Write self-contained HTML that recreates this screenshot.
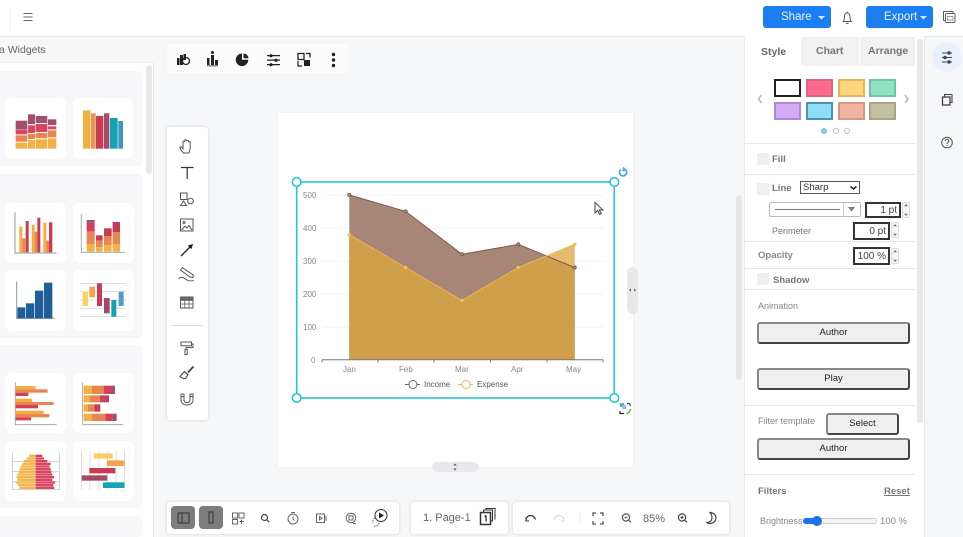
<!DOCTYPE html>
<html lang="en"><head><meta charset="utf-8"><title>Chart editor</title>
<style>
html,body{margin:0;padding:0;background:#fff;width:963px;height:537px;overflow:hidden}
body{position:relative;font-family:"Liberation Sans",sans-serif;color:#555}
div{position:absolute;box-sizing:border-box}
#root{left:0;top:0;width:963px;height:537px;overflow:hidden}
.t{white-space:nowrap;line-height:1;filter:blur(.3px);margin-top:1px}
.card{background:#fff;border-radius:7px}
.grp{background:#f7f7fa;border-radius:0 6px 6px 0;left:0;width:143px}
.pan{background:#fff;border-radius:3px;box-shadow:0 0 3px rgba(0,0,0,.16)}
.sw{width:27px;height:18px;border:2px solid}
.hr{left:744px;width:171px;height:1px;background:#e6e6e6}
.chk{width:12px;height:12px;background:#efeff1}
.btn{background:#efeff0;border:2px solid #888;border-right-color:#444;border-bottom-color:#444;border-radius:3px;font-size:9.5px;color:#222;text-align:center;margin-top:0}
.inp{background:#fff;border:2px solid #333;font-size:10px;color:#444;text-align:right;padding-right:2px;margin-top:0}
.spin{background:#f4f4f4;border:1px solid #ddd;border-radius:2px;width:8px}
</style></head><body><div id="root">

<!-- backgrounds -->
<div style="left:0;top:36px;width:963px;height:501px;background:#f6f7f9"></div>
<div style="left:0;top:36px;width:963px;height:1px;background:#e9e9ea"></div>
<div style="left:10px;top:8px;width:1px;height:22px;background:#efefef"></div>
<div style="left:0;top:37px;width:154px;height:500px;background:#fff;border-right:1px solid #e6e7ea"></div>
<div style="left:0;top:37px;width:154px;height:26px;background:#f7f7f9;border-bottom:1px solid #eee"></div>
<div class="t" style="left:-1px;top:44px;font-size:10.5px;color:#666">a Widgets</div>
<div style="left:146px;top:65px;width:6px;height:109px;background:#e8e8ea;border-radius:3px"></div>

<div class="grp" style="top:71px;height:95px"></div>
<div class="grp" style="top:174px;height:164px"></div>
<div class="grp" style="top:345px;height:163px"></div>
<div class="grp" style="top:516px;height:21px"></div>
<div class="card" style="left:5px;top:98px;width:61px;height:61px"></div>
<div class="card" style="left:73px;top:98px;width:60px;height:61px"></div>
<div class="card" style="left:5px;top:203px;width:61px;height:60px"></div>
<div class="card" style="left:73px;top:203px;width:61px;height:60px"></div>
<div class="card" style="left:5px;top:270px;width:61px;height:61px"></div>
<div class="card" style="left:73px;top:270px;width:61px;height:61px"></div>
<div class="card" style="left:5px;top:373px;width:61px;height:60px"></div>
<div class="card" style="left:73px;top:373px;width:61px;height:60px"></div>
<div class="card" style="left:5px;top:441px;width:61px;height:60px"></div>
<div class="card" style="left:73px;top:441px;width:61px;height:60px"></div>

<!-- canvas chrome -->
<div style="left:167px;top:44px;width:182px;height:30px;background:#fbfbfc;border-radius:2px;box-shadow:0 0 1px rgba(0,0,0,.08)"></div>
<div class="pan" style="left:167px;top:127px;width:41px;height:293px"></div>
<div style="left:171px;top:325px;width:32px;height:1px;background:#ddd"></div>
<div style="left:278px;top:113px;width:355px;height:354px;background:#fff;box-shadow:0 0 2px rgba(0,0,0,.08)"></div>
<div style="left:627px;top:267px;width:11px;height:47px;background:#e8e8eb;border-radius:6px"></div>
<div style="left:432px;top:462px;width:47px;height:10px;background:#e8e8eb;border-radius:6px"></div>
<div style="left:736px;top:195px;width:6px;height:185px;background:#e6e6e8;border-radius:3px"></div>

<div class="pan" style="left:167px;top:502px;width:232px;height:32px"></div>
<div class="pan" style="left:411px;top:502px;width:97px;height:32px"></div>
<div class="pan" style="left:513px;top:502px;width:216px;height:32px"></div>
<div style="left:171px;top:506px;width:24px;height:23px;background:#7d7d7f;border-radius:4px"></div>
<div style="left:199px;top:506px;width:24px;height:23px;background:#7d7d7f;border-radius:4px"></div>
<div class="t" style="left:423px;top:512px;font-size:11px;color:#666">1. Page-1</div>
<div class="t" style="left:643px;top:513px;font-size:11px;color:#666">85%</div>

<!-- chart labels -->
<div class="t" style="left:303px;top:191px;font-size:8px;color:#888">500</div>
<div class="t" style="left:303px;top:224px;font-size:8px;color:#888">400</div>
<div class="t" style="left:303px;top:257px;font-size:8px;color:#888">300</div>
<div class="t" style="left:303px;top:290px;font-size:8px;color:#888">200</div>
<div class="t" style="left:303px;top:323px;font-size:8px;color:#888">100</div>
<div class="t" style="left:311px;top:356px;font-size:8px;color:#888">0</div>
<div class="t" style="left:343px;top:365px;font-size:8px;color:#888">Jan</div>
<div class="t" style="left:399px;top:365px;font-size:8px;color:#888">Feb</div>
<div class="t" style="left:455px;top:365px;font-size:8px;color:#888">Mar</div>
<div class="t" style="left:511px;top:365px;font-size:8px;color:#888">Apr</div>
<div class="t" style="left:566px;top:365px;font-size:8px;color:#888">May</div>
<div class="t" style="left:424px;top:380px;font-size:8px;color:#555">Income</div>
<div class="t" style="left:477px;top:380px;font-size:8px;color:#555">Expense</div>

<!-- top bar -->
<div style="left:763px;top:6px;width:68px;height:22px;background:#1b7ef2;border-radius:3px"></div>
<div style="left:866px;top:6px;width:67px;height:22px;background:#1b7ef2;border-radius:3px"></div>
<div class="t" style="left:781px;top:11px;font-size:11.5px;color:#e8f2ff">Share</div>
<div class="t" style="left:884px;top:11px;font-size:11.5px;color:#e8f2ff">Export</div>

<!-- right panel -->
<div style="left:744px;top:36px;width:181px;height:501px;background:#fff;border-left:1px solid #e8e8e8;border-right:1px solid #e8e8e8"></div>
<div style="left:801px;top:37px;width:58px;height:29px;background:#f1f1f2"></div>
<div style="left:860px;top:37px;width:55px;height:29px;background:#f1f1f2"></div>
<div class="t" style="left:761px;top:46px;font-size:10.5px;font-weight:bold;color:#666">Style</div>
<div class="t" style="left:816px;top:45px;font-size:10.5px;font-weight:bold;color:#777">Chart</div>
<div class="t" style="left:868px;top:45px;font-size:10.5px;font-weight:bold;color:#777">Arrange</div>
<div style="left:917px;top:39px;width:6px;height:384px;background:#e8e8ea;border-radius:3px"></div>

<div class="sw" style="left:774px;top:79px;background:#fff;border-color:#222"></div>
<div class="sw" style="left:806px;top:79px;background:#ff6b8e;border-color:#d9667f"></div>
<div class="sw" style="left:838px;top:79px;background:#ffd57f;border-color:#e0b45c"></div>
<div class="sw" style="left:869px;top:79px;background:#8fe3c4;border-color:#6fc4a6"></div>
<div class="sw" style="left:774px;top:102px;background:#d4a9f8;border-color:#b08ad0"></div>
<div class="sw" style="left:806px;top:102px;background:#90dcfb;border-color:#4d93ad"></div>
<div class="sw" style="left:838px;top:102px;background:#f2b4a0;border-color:#d19a88"></div>
<div class="sw" style="left:869px;top:102px;background:#c5bfa0;border-color:#a8a488"></div>
<div style="left:821px;top:128px;width:6px;height:6px;border-radius:50%;background:#88c6ee"></div>
<div style="left:833px;top:128px;width:6px;height:6px;border-radius:50%;border:1px solid #bbb"></div>
<div style="left:844px;top:128px;width:6px;height:6px;border-radius:50%;border:1px solid #bbb"></div>

<div class="hr" style="top:143px"></div>
<div class="hr" style="top:174px"></div>
<div class="hr" style="top:241px"></div>
<div class="hr" style="top:268px"></div>
<div class="hr" style="top:289px"></div>
<div class="hr" style="top:405px"></div>
<div class="hr" style="top:474px"></div>

<div class="chk" style="left:757px;top:153px"></div>
<div class="t" style="left:772px;top:154px;font-size:9.5px;font-weight:bold;color:#777">Fill</div>
<div class="chk" style="left:757px;top:183px"></div>
<div class="t" style="left:772px;top:183px;font-size:9.5px;font-weight:bold;color:#777">Line</div>
<div style="left:800px;top:181px;width:60px;height:13px;border:1px solid #555;background:#fff"></div>
<div class="t" style="left:803px;top:182px;font-size:9.5px;color:#333">Sharp</div>
<div style="left:769px;top:202px;width:92px;height:15px;border:1px solid #bbb;border-radius:2px;background:#fff"></div>
<div style="left:775px;top:209px;width:65px;height:1px;background:#777"></div>
<div style="left:843px;top:203px;width:1px;height:13px;background:#ccc"></div>
<div class="inp t" style="left:865px;top:202px;width:36px;height:16px;line-height:14px">1 pt</div>
<div class="spin" style="left:902px;top:202px;height:16px"></div>
<div class="t" style="left:772px;top:226px;font-size:9px;color:#777">Perimeter</div>
<div class="inp t" style="left:853px;top:222px;width:37px;height:18px;line-height:15px">0 pt</div>
<div class="spin" style="left:891px;top:222px;height:16px"></div>
<div class="t" style="left:758px;top:250px;font-size:9.5px;font-weight:bold;color:#888">Opacity</div>
<div class="inp t" style="left:853px;top:247px;width:37px;height:18px;line-height:15px">100 %</div>
<div class="spin" style="left:891px;top:248px;height:16px"></div>
<div class="chk" style="left:757px;top:273px"></div>
<div class="t" style="left:773px;top:275px;font-size:9.5px;font-weight:bold;color:#777">Shadow</div>
<div class="t" style="left:758px;top:301px;font-size:9px;color:#888">Animation</div>
<div class="btn t" style="left:757px;top:322px;width:153px;height:22px;line-height:18px">Author</div>
<div class="btn t" style="left:757px;top:368px;width:153px;height:22px;line-height:18px">Play</div>
<div class="t" style="left:758px;top:416px;font-size:9px;color:#888">Filter template</div>
<div class="btn t" style="left:826px;top:413px;width:73px;height:22px;line-height:18px">Select</div>
<div class="btn t" style="left:757px;top:438px;width:153px;height:22px;line-height:18px">Author</div>
<div class="t" style="left:758px;top:486px;font-size:9.5px;font-weight:bold;color:#777">Filters</div>
<div class="t" style="left:884px;top:486px;font-size:9.5px;font-weight:bold;color:#777;text-decoration:underline">Reset</div>
<div class="t" style="left:760px;top:516px;font-size:9px;color:#888">Brightness</div>
<div style="left:803px;top:518px;width:74px;height:6px;border:1px solid #ccc;border-radius:3px;background:#f4f4f4"></div>
<div style="left:803px;top:518px;width:14px;height:6px;border-radius:3px;background:#1a73e8"></div>
<div style="left:812px;top:516px;width:10px;height:10px;border-radius:50%;background:#1a73e8"></div>
<div class="t" style="left:880px;top:516px;font-size:9.5px;color:#888">100 %</div>
<div style="left:932px;top:42px;width:30px;height:30px;border-radius:50%;background:#eaf0fb"></div>

<!-- vector overlay -->
<svg width="963" height="537" viewBox="0 0 963 537" style="position:absolute;left:0;top:0;filter:blur(.3px)">
<g transform="scale(.33333)">
 <rect x="47" y="362" width="35" height="26" fill="#a0506a"/><rect x="47" y="389" width="35" height="14" fill="#d9445f"/><rect x="47" y="406" width="35" height="19" fill="#e8864f"/><rect x="47" y="428" width="35" height="18" fill="#f0b245"/>
 <rect x="84" y="343" width="21" height="29" fill="#a0506a"/><rect x="84" y="376" width="21" height="23" fill="#d9445f"/><rect x="84" y="402" width="21" height="15" fill="#e8864f"/><rect x="84" y="420" width="21" height="26" fill="#f0b245"/>
 <rect x="107" y="348" width="35" height="21" fill="#a0506a"/><rect x="107" y="372" width="35" height="24" fill="#d9445f"/><rect x="107" y="399" width="35" height="16" fill="#e8864f"/><rect x="107" y="418" width="35" height="28" fill="#f0b245"/>
 <rect x="144" y="358" width="25" height="17" fill="#a0506a"/><rect x="144" y="379" width="25" height="9" fill="#d9445f"/><rect x="144" y="391" width="25" height="21" fill="#e8864f"/><rect x="144" y="415" width="25" height="31" fill="#f0b245"/>
 <rect x="249" y="331" width="22" height="115" fill="#f0b040"/><rect x="273" y="340" width="14" height="106" fill="#e8964f"/><rect x="288" y="348" width="22" height="98" fill="#c93a55"/><rect x="312" y="340" width="16" height="106" fill="#a34a68"/><rect x="330" y="354" width="23" height="92" fill="#14a3b5"/><rect x="355" y="363" width="14" height="83" fill="#3f92c2"/>
 <path d="M45 637V759H170" fill="none" stroke="#999" stroke-width="3"/>
 <rect x="58" y="680" width="9" height="77" fill="#f0b040"/><rect x="67" y="715" width="9" height="42" fill="#e8864f"/><rect x="77" y="663" width="9" height="94" fill="#c93a55"/>
 <rect x="95" y="674" width="9" height="83" fill="#f0b040"/><rect x="104" y="695" width="8" height="62" fill="#e8864f"/><rect x="112" y="653" width="9" height="104" fill="#c93a55"/>
 <rect x="130" y="668" width="9" height="89" fill="#f0b040"/><rect x="139" y="722" width="8" height="35" fill="#e8864f"/><rect x="147" y="667" width="10" height="90" fill="#c93a55"/>
 <path d="M244 642V757H375" fill="none" stroke="#aaa" stroke-width="3"/>
 <rect x="260" y="660" width="24" height="8" fill="#a0506a"/><rect x="260" y="668" width="24" height="27" fill="#d33e5a"/><rect x="260" y="695" width="24" height="37" fill="#e8864f"/><rect x="260" y="732" width="24" height="23" fill="#f0b245"/>
 <rect x="288" y="706" width="20" height="16" fill="#c93a55"/><rect x="288" y="722" width="20" height="20" fill="#e8864f"/><rect x="288" y="742" width="20" height="13" fill="#f0b245"/>
 <rect x="312" y="685" width="23" height="23" fill="#c93a55"/><rect x="312" y="708" width="23" height="28" fill="#e8864f"/><rect x="312" y="736" width="23" height="19" fill="#f0b245"/>
 <rect x="338" y="666" width="22" height="31" fill="#c93a55"/><rect x="338" y="697" width="22" height="35" fill="#e8864f"/><rect x="338" y="732" width="22" height="23" fill="#f0b245"/>
</g>
<g transform="translate(0,270) scale(.33333)">
 <path d="M50 35V145H164" fill="none" stroke="#8a97a5" stroke-width="3"/>
 <rect x="52" y="112" width="24" height="33" fill="#1f5f99"/><rect x="78" y="100" width="25" height="45" fill="#1f5f99"/><rect x="105" y="62" width="25" height="83" fill="#1f5f99"/><rect x="132" y="38" width="25" height="107" fill="#1f5f99"/>
 <path d="M240 40H378M240 65H378M240 90H378M240 115H378M240 140H378" stroke="#ccc" stroke-width="2"/>
 <rect x="248" y="65" width="16" height="43" fill="#fbd060"/><rect x="268" y="50" width="17" height="32" fill="#f5a24e"/><rect x="291" y="40" width="15" height="68" fill="#c93a55"/><rect x="312" y="84" width="17" height="46" fill="#a34a68"/><rect x="334" y="90" width="15" height="50" fill="#14a3b5"/><rect x="356" y="65" width="15" height="43" fill="#4e9cc9"/>
 <path d="M46 337V464H170" fill="none" stroke="#aaa" stroke-width="3"/>
 <rect x="47" y="348" width="60" height="10" fill="#f0b040"/><rect x="47" y="358" width="96" height="10" fill="#e8864f"/><rect x="47" y="368" width="38" height="10" fill="#d33e5a"/>
 <rect x="47" y="386" width="49" height="10" fill="#f0b040"/><rect x="47" y="396" width="114" height="9" fill="#e8864f"/><rect x="47" y="405" width="67" height="10" fill="#d33e5a"/>
 <rect x="47" y="422" width="84" height="10" fill="#f0b040"/><rect x="47" y="432" width="101" height="10" fill="#e8864f"/><rect x="47" y="442" width="46" height="9" fill="#d33e5a"/>
 <path d="M248 337V464H370" fill="none" stroke="#aaa" stroke-width="3"/>
 <rect x="251" y="347" width="25" height="25" fill="#f0b245"/><rect x="276" y="347" width="35" height="25" fill="#e8864f"/><rect x="311" y="347" width="22" height="25" fill="#d33e5a"/><rect x="333" y="347" width="12" height="25" fill="#a0506a"/>
 <rect x="251" y="376" width="19" height="21" fill="#f0b245"/><rect x="270" y="376" width="30" height="21" fill="#e8864f"/><rect x="300" y="376" width="18" height="21" fill="#d33e5a"/><rect x="318" y="376" width="9" height="21" fill="#a0506a"/>
 <rect x="251" y="403" width="13" height="22" fill="#f0b245"/><rect x="264" y="403" width="19" height="22" fill="#e8864f"/><rect x="283" y="403" width="18" height="22" fill="#c93a55"/>
 <rect x="251" y="431" width="25" height="22" fill="#f0b245"/><rect x="276" y="431" width="40" height="22" fill="#e8864f"/><rect x="316" y="431" width="22" height="22" fill="#d33e5a"/><rect x="338" y="431" width="12" height="22" fill="#a0506a"/>
 <path d="M37 548V658H178V548M37 575H178M37 605H178M37 635H178" fill="none" stroke="#bbb" stroke-width="2"/>
 <g fill="#f3b64e">
 <rect x="87" y="554" width="20" height="7"/><rect x="79" y="562" width="28" height="7"/><rect x="72" y="570" width="35" height="7"/><rect x="67" y="578" width="40" height="7"/><rect x="62" y="586" width="45" height="7"/><rect x="59" y="594" width="48" height="7"/><rect x="57" y="602" width="50" height="7"/><rect x="52" y="610" width="55" height="7"/><rect x="50" y="618" width="57" height="7"/><rect x="52" y="626" width="55" height="7"/><rect x="47" y="634" width="60" height="7"/><rect x="54" y="642" width="53" height="7"/><rect x="58" y="650" width="49" height="7"/>
 </g>
 <g fill="#d8435f">
 <rect x="107" y="554" width="20" height="7"/><rect x="107" y="562" width="25" height="7"/><rect x="107" y="570" width="35" height="7"/><rect x="107" y="578" width="45" height="7"/><rect x="107" y="586" width="42" height="7"/><rect x="107" y="594" width="45" height="7"/><rect x="107" y="602" width="47" height="7"/><rect x="107" y="610" width="50" height="7"/><rect x="107" y="618" width="55" height="7"/><rect x="107" y="626" width="50" height="7"/><rect x="107" y="634" width="58" height="7"/><rect x="107" y="642" width="53" height="7"/><rect x="107" y="650" width="56" height="7"/>
 </g>
 <path d="M245 545V660M270 545V660M297 545V660M322 545V660M348 545V660M374 545V660" stroke="#ccc" stroke-width="2"/>
 <rect x="282" y="550" width="56" height="16" fill="#fbd060"/><rect x="321" y="571" width="52" height="17" fill="#f9a24e"/><rect x="268" y="594" width="78" height="16" fill="#c93a55"/><rect x="245" y="616" width="77" height="16" fill="#a34a68"/><rect x="309" y="637" width="64" height="17" fill="#14a3b5"/>
</g>

<!-- main chart -->
<path d="M322 195.3H603M322 228.2H603M322 261.2H603M322 294.1H603M322 327H603" stroke="#f2f2f2"/>
<path d="M349.3 195L405.7 211.4L462 254.3L518.3 244.4L574.7 267.5V359.7H349.3Z" fill="#a78678"/>
<path d="M349.3 234.5L405.7 267.5L462 300.4L518.3 267.5L574.7 244.4V359.7H349.3Z" fill="#e3bc6e"/>
<path d="M349.3 234.5L405.7 267.5L462 300.4L518.3 267.5L546 255.8L574.7 267.5V359.7H349.3Z" fill="#cf9f4c"/>
<path d="M349.3 195L405.7 211.4L462 254.3L518.3 244.4L574.7 267.5" fill="none" stroke="#7e5a52"/>
<path d="M349.3 234.5L405.7 267.5L462 300.4L518.3 267.5L574.7 244.4" fill="none" stroke="#eeb64c"/>
<g fill="#b79a8c" stroke="#7e5a52"><circle cx="349.3" cy="195" r="1.5"/><circle cx="405.7" cy="211.4" r="1.5"/><circle cx="462" cy="254.3" r="1.5"/><circle cx="518.3" cy="244.4" r="1.5"/><circle cx="574.7" cy="267.5" r="1.5"/></g>
<g fill="#f2d9a0" stroke="#eeb64c"><circle cx="349.3" cy="234.5" r="1.3"/><circle cx="405.7" cy="267.5" r="1.3"/><circle cx="462" cy="300.4" r="1.3"/><circle cx="518.3" cy="267.5" r="1.3"/><circle cx="574.7" cy="244.4" r="1.3"/></g>
<path d="M322 359.7H603M322 359.7V362.5M378 359.7V362.5M434 359.7V362.5M490.5 359.7V362.5M547 359.7V362.5M603 359.7V362.5" stroke="#777" fill="none"/>
<path d="M405 384.5H420" stroke="#7e5a52"/><circle cx="413" cy="384.5" r="4" fill="#fff" stroke="#7e5a52"/>
<path d="M458 384.5H473" stroke="#eeb64c"/><circle cx="466" cy="384.5" r="4" fill="#fff" stroke="#eeb64c"/>
<!-- selection -->
<rect x="296.7" y="182" width="317.5" height="216" fill="none" stroke="#27c5d8" stroke-width="1.6"/>
<g fill="#fff" stroke="#27c5d8" stroke-width="1.6"><circle cx="296.7" cy="182" r="4.3"/><circle cx="614.3" cy="182" r="4.3"/><circle cx="296.7" cy="398" r="4.3"/><circle cx="614.3" cy="398" r="4.3"/></g>
<path d="M620.8 169.5a3.6 3.6 0 1 0 4.5 0M623 167.5l2 2.200-2.500 1" fill="none" stroke="#4aa6e6" stroke-width="1.700"/>
<path d="M595 202.500V213l2.700-2.500 2 4 1.600-.8-2-3.800h3.500Z" fill="#fff" stroke="#444"/>
<rect x="620" y="403" width="4" height="4" fill="#5aa5e0"/><rect x="622" y="405" width="4" height="4" fill="#8cc0ea"/>
<path d="M627 403.500l2.500 0 1 2.500" fill="none" stroke="#333"/><path d="M630.500 409c-.5 3-2 4-4 4.500" fill="none" stroke="#3aa63a" stroke-width="1.200"/><path d="M620 411v2.500h4" fill="none" stroke="#222" stroke-width="1.200"/>
<!-- handles -->
<path d="M631 288.500l-2 1.500 2 1.500ZM634 288.500l2 1.500-2 1.500Z" fill="#555"/>
<path d="M455 463.500l-1.700 2h3.400ZM455 470.500l-1.700-2h3.400Z" fill="#555"/>

<path d="M23.500 13.500h9M23.500 17h9M23.500 20.500h9" stroke="#666" stroke-width="1.100"/>
<path d="M818 16h7l-3.500 3.500ZM920 16h7l-3.500 3.500Z" fill="#dbe9fb"/>
<path d="M842.500 21.500h9.500M843.500 21c1-1 .8-3 1-5 .2-2 1.300-3 2.700-3s2.500 1 2.700 3c.2 2 0 4 1 5M846 23c.8.800 1.800.800 2.500 0M847.200 11.500v1.500" fill="none" stroke="#555"/>
<path d="M945.500 20.500h-2v-9h9.500v2" fill="none" stroke="#666"/><rect x="945.500" y="13.500" width="9.500" height="9" rx="1" fill="#fff" stroke="#666"/><rect x="947.500" y="16.500" width="5.500" height="3.500" fill="none" stroke="#888" stroke-width=".8"/>

<!-- top toolbar icons -->
<g fill="#222">
 <rect x="177" y="58" width="2.500" height="7"/><rect x="180" y="55" width="3" height="10"/><rect x="183.500" y="54" width="2.500" height="6"/>
 <circle cx="186" cy="61" r="3.500" fill="none" stroke="#222" stroke-width="1.300"/>
 <rect x="207" y="58" width="2.500" height="7"/><rect x="211" y="55" width="3" height="10"/><rect x="215" y="60" width="3" height="5"/><circle cx="212.500" cy="52.500" r="1.500"/><path d="M207 65.500h11v.8h-11Z"/>
 <path d="M242 53.500a6.300 6.300 0 1 0 6.300 6.300h-6.300Z"/><path d="M243.500 53.500a5 5 0 0 1 5 4.800h-5Z"/>
 <path d="M267 55h13v1.300h-13ZM267 59.500h13v1.300h-13ZM267 64h13v1.300h-13Z"/><circle cx="271" cy="55.700" r="1.600"/><circle cx="276" cy="60.200" r="1.600"/><circle cx="271" cy="64.700" r="1.600"/>
 <path d="M298 53.500h6v6h-6Z" fill="none" stroke="#222" stroke-width="1.300"/><rect x="304" y="60" width="6" height="6"/><path d="M298 61v5h4M306 53.500h4v4" fill="none" stroke="#222" stroke-width="1.300"/>
 <circle cx="333.500" cy="54.500" r="1.700"/><circle cx="333.500" cy="60" r="1.700"/><circle cx="333.500" cy="65.500" r="1.700"/>
</g>

<!-- left tool icons -->
<g fill="none" stroke="#555">
 <path d="M183.500 153c-1.500-1.500-3-3.500-3.500-5-.4-1.200 1-1.800 1.900-.6l1.100 1.500V142c0-1.300 1.800-1.300 1.800 0v-1.300c0-1.300 1.900-1.300 1.900 0v.6c0-1.300 1.800-1.300 1.800 0v1.200c0-1.200 1.700-1.200 1.700 0v5.500c0 1.800-.8 3.200-1.300 5Z"/>
 <path d="M181 167.500h12.500M187.200 167.500V179" stroke="#333" stroke-width="1.200"/>
 <rect x="180.500" y="193" width="6.500" height="6.500"/><path d="M183.500 201l3 4.500h-6Z"/><circle cx="190.500" cy="201" r="2.800"/>
 <rect x="180.500" y="219" width="12.500" height="12"/><circle cx="184" cy="222.500" r="1"/><path d="M181.500 230l3.500-4 2 2 2-2.500 3 4.500"/>
 <path d="M181 256l9.500-9.500" stroke="#222" stroke-width="1.300"/><path d="M193 244l-5.300 1.500 3.800 3.800Z" fill="#222" stroke="none"/>
 <path d="M178.500 279c2-2.500 4.500-2 6.500-.3s5.500 3.300 9 1.300M180.500 270l1.800-2.300 11 7.300-.5 2.500-3-.5Z"/>
 <rect x="180.500" y="297" width="12.500" height="11"/><path d="M180.500 300.500h12.500M180.500 304h12.500M184.800 297v11M189 297v11" stroke-width=".8"/><rect x="180.500" y="297" width="12.500" height="3" fill="#666" stroke="none"/>
 <path d="M181 342h10.500v3.800H181ZM191.500 344h1.500v3.500h-7v2M185 349.500h2.200v5h-2.200Z"/>
 <path d="M193.500 366.500l-5.500 6" stroke="#444" stroke-width="1.800"/><path d="M180 376.500l4.500-5 3.500 3-2.500 4c-2 .2-4-.5-5.500-2Z" stroke-width="1.200"/>
 <path d="M181 394v6c0 3 2.500 5 6 5s6-2 6-5v-6h-3v6c0 1.500-1 2.500-3 2.500s-3-1-3-2.500v-6ZM181 396.500h3M190 396.500h3"/>
</g>

<!-- bottom toolbar icons -->
<g fill="none" stroke="#333">
 <rect x="178" y="513" width="11" height="10"/><path d="M182 513v10"/>
 <rect x="209" y="512" width="4" height="11"/>
</g>
<g fill="none" stroke="#666">
 <rect x="232.500" y="513" width="5" height="5"/><rect x="239" y="513" width="5" height="5"/><rect x="232.500" y="519.500" width="5" height="4.500"/><path d="M241.500 519.500v4.500M239.500 521.500h4.500"/>
 <circle cx="264.500" cy="517.500" r="3" stroke="#444" stroke-width="1.200"/><path d="M266.700 519.700l2.500 2.500" stroke="#444" stroke-width="1.300"/>
 <circle cx="293" cy="519" r="5"/><path d="M293 516.500v2.500l1.500 1.500M291 512.500h4"/>
 <rect x="316.500" y="514" width="8" height="8.500"/><path d="M319.500 516.500l2.500 1.700-2.500 1.700ZM326 515.500v5.500"/>
 <circle cx="351" cy="518" r="4.800"/><rect x="349" y="516" width="4" height="4"/><path d="M353 523.500h3"/>
 <circle cx="381" cy="515.500" r="6" stroke="#333"/><path d="M379 512.500l5 3-5 3Z" fill="#222" stroke="none"/>
 <path d="M375 518a4 4 0 0 0-2 5M379 523a4 4 0 0 1-5 3" stroke-dasharray="1.500 1"/>
 <rect x="480.500" y="512.500" width="10" height="12" fill="#fff" stroke="#333" stroke-width="1.500"/>
 <path d="M483.500 512v-2h9v11h-2M486 510v-1.500h9v11" stroke="#333"/>
</g>
<path d="M486 515.500v6M484.500 516.500l1.500-1" stroke="#222" stroke-width="1.200" fill="none"/>
<g fill="none" stroke="#333" stroke-width="1.200">
 <path d="M526 520c.5-3 2-4.500 4.500-4.500 2.500 0 4 1.500 5 4"/>
 <path d="M526 517.500v3.500h3" stroke-width="1.100"/>
 <path d="M554 520c1-3 2.500-4.500 5-4.500s4 1.500 5 4M564 517.500v3.500h-3" stroke="#ddd"/>
 <path d="M580 512v10" stroke="#eee"/>
 <path d="M593 516v-3h3M600 513h3v3M603 521v3h-3M596 524h-3v-3" stroke="#555" stroke-width="1.300"/>
 <circle cx="626" cy="517.500" r="3.600" stroke="#555"/><path d="M624.500 517.500h3M628.500 520l2.500 2.500" stroke="#555"/>
 <circle cx="682" cy="517.500" r="3.600" stroke="#444"/><path d="M680.500 517.500h3M682 516v3M684.500 520l2.500 2.500" stroke="#444"/>
 <path d="M710 512.500c3.500 0 6 2.500 6 5.500 0 3.200-3 5.500-6 5.500-1.300 0-2.200-.3-3-1 3 0 5-2 5-5 0-2-1-3.700-2-5Z" stroke="#444"/>
</g>

<!-- right panel icons -->
<path d="M761.500 95l-3 4 3 4M905 95l3 4-3 4" fill="none" stroke="#bbb" stroke-width="1.600"/>
<path d="M850.500 186.500l3 2.500 3-2.500" fill="none" stroke="#222" stroke-width="1.500"/>
<path d="M848 207h7l-3.500 4.500Z" fill="#777"/>
<path d="M906 204l-2 2.200h4ZM906 216l-2-2.200h4ZM895 224l-2 2.200h4ZM895 236l-2-2.200h4ZM895 250l-2 2.200h4ZM895 262l-2-2.200h4Z" fill="#777"/>
<g fill="none" stroke="#444">
 <path d="M942 53h10M942 57.500h10M942 62h10"/>
 <circle cx="949" cy="53" r="1.200" fill="#444"/><circle cx="945" cy="57.500" r="1.200" fill="#444"/><circle cx="949" cy="62" r="1.200" fill="#444"/>
 <rect x="942.500" y="97" width="7.500" height="8" stroke-width="1.300"/><path d="M944.500 97v-2.500h7.500v8h-2" stroke-width="1.100"/>
 <circle cx="947" cy="142.500" r="5.300" stroke="#555"/><path d="M945.200 141c0-2.300 3.700-2.300 3.700 0 0 1.500-1.900 1.500-1.900 3M947 145v1" stroke="#555"/>
</g>
</svg>
</div></body></html>
